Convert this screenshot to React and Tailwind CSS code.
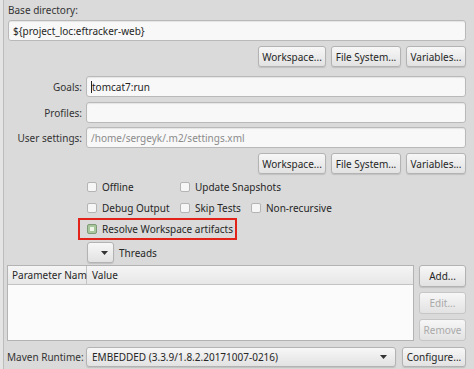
import React from "react";

const btn =
  "h-full rounded-[3px] border border-[#b3b3b3] bg-gradient-to-b from-[#f7f7f7] to-[#e2e2e2] shadow-[0_1px_1px_rgba(0,0,0,0.12)] flex items-center justify-center";

function Button({ children, w, disabled }) {
  return (
    <div
      className={`${btn} ${w} ${disabled ? "text-[#a9a9a9] border-[#c6c6c6] from-[#e6e6e6] to-[#dcdcdc] shadow-none" : "text-[#262626]"}`}
    >
      {children}
    </div>
  );
}

function Arrow() {
  return (
    <svg width="7" height="4" viewBox="0 0 7 4">
      <path d="M0 0 H7 L3.5 4 Z" fill="#333" />
    </svg>
  );
}

function Field({ children, muted, caret }) {
  return (
    <div className="flex-1 h-full rounded-[3px] border border-[#b9b9b9] bg-[#f8f8f8] shadow-[inset_0_1px_1px_rgba(0,0,0,0.08)] flex items-center px-[4px]">
      {caret && <span className="w-px h-[12px] bg-[#222]" />}
      <span className={muted ? "text-[#8b8b8b]" : "text-[#262626]"}>{children}</span>
    </div>
  );
}

function Check({ label, w, checked }) {
  return (
    <div className={`flex items-center ${w}`}>
      {checked ? (
        <span className="w-[10px] h-[10px] rounded-[2px] border border-[#7f9a76] bg-[#a9c79c] flex items-center justify-center">
          <span className="w-[4px] h-[4px] bg-[#eef6e8]" />
        </span>
      ) : (
        <span className="w-[10px] h-[10px] rounded-[2px] border border-[#b4b4b4] bg-[#f6f6f6]" />
      )}
      <span className="ml-[5px] text-[#262626]">{label}</span>
    </div>
  );
}

function ButtonRow() {
  return (
    <div className="h-[21px] flex justify-end gap-[5px]">
      <Button w="w-[68px]">Workspace...</Button>
      <Button w="w-[70px]">File System...</Button>
      <Button w="w-[60px]">Variables...</Button>
    </div>
  );
}

function LabeledField({ label, children, muted, caret, mt }) {
  return (
    <div className={`h-[21px] flex ${mt}`}>
      <div className="w-[78px] pr-[4px] text-right self-center text-[#333]">{label}</div>
      <Field muted={muted} caret={caret}>{children}</Field>
    </div>
  );
}

export default function App() {
  return (
    <div className="w-[474px] h-[369px] overflow-hidden bg-[#dadada] flex font-['Noto_Sans',sans-serif] text-[10px] leading-none">
      {/* window edge */}
      <div className="w-[3px] bg-[#e4e4e4]" />
      <div className="w-px bg-[#bcbcbc]" />

      <div className="flex-1 flex flex-col pl-[4px] pr-[8px]">
        <div className="h-[20px] flex items-center text-[#333]">Base directory:</div>
        <div className="h-[21px] flex">
          <Field>{"${project_loc:eftracker-web}"}</Field>
        </div>
        <div className="mt-[5px]">
          <ButtonRow />
        </div>

        <LabeledField label="Goals:" caret mt="mt-[9px]">tomcat7:run</LabeledField>
        <LabeledField label="Profiles:" mt="mt-[5px]" />
        <LabeledField label="User settings:" muted mt="mt-[4px]">
          /home/sergeyk/.m2/settings.xml
        </LabeledField>

        <div className="mt-[5px]">
          <ButtonRow />
        </div>

        <div className="mt-[3px] h-[20px] flex pl-[79px]">
          <Check label="Offline" w="w-[93px]" />
          <Check label="Update Snapshots" />
        </div>
        <div className="mt-[1px] h-[20px] flex pl-[79px]">
          <Check label="Debug Output" w="w-[93px]" />
          <Check label="Skip Tests" w="w-[71px]" />
          <Check label="Non-recursive" />
        </div>
        <div className="h-[22px] flex pl-[70px]">
          <div className="w-[159px] h-full border-2 border-[#e2231a] flex items-center pl-[7px]">
            <Check label="Resolve Workspace artifacts" checked />
          </div>
        </div>

        <div className="mt-[2px] h-[21px] flex items-center pl-[79px]">
          <div className={`${btn} w-[27px] !justify-end pr-[5px]`}>
            <Arrow />
          </div>
          <span className="ml-[5px] text-[#262626]">Threads</span>
        </div>

        <div className="mt-[2px] h-[76px] flex gap-[5px]">
          <div className="flex-1 flex flex-col border border-[#b3b3b3] bg-[#fbfbfb] -ml-px">
            <div className="h-[19px] flex border-b border-[#c4c4c4] bg-gradient-to-b from-[#f5f5f5] to-[#e7e7e7] text-[#262626]">
              <div className="w-[79px] border-r border-[#c4c4c4] flex items-center pl-[4px] whitespace-nowrap">
                Parameter Nam
              </div>
              <div className="flex items-center pl-[5px]">Value</div>
            </div>
            <div className="flex-1" />
          </div>
          <div className="w-[47px] flex flex-col gap-[5px]">
            <div className="h-[22px]">
              <Button w="w-full">Add...</Button>
            </div>
            <div className="h-[22px]">
              <Button w="w-full" disabled>Edit...</Button>
            </div>
            <div className="h-[22px]">
              <Button w="w-full" disabled>Remove</Button>
            </div>
          </div>
        </div>

        <div className="mt-[6px] h-[20px] flex">
          <div className="w-[79px] -ml-px self-center text-[#333]">Maven Runtime:</div>
          <div className={`${btn} w-[310px] !justify-between px-[5px] text-[#262626]`}>
            <span>EMBEDDED (3.3.9/1.8.2.20171007-0216)</span>
            <span className="mr-[3px] flex"><Arrow /></span>
          </div>
          <div className="ml-[6px] flex-1 h-full">
            <Button w="w-full">Configure...</Button>
          </div>
        </div>
      </div>
    </div>
  );
}
